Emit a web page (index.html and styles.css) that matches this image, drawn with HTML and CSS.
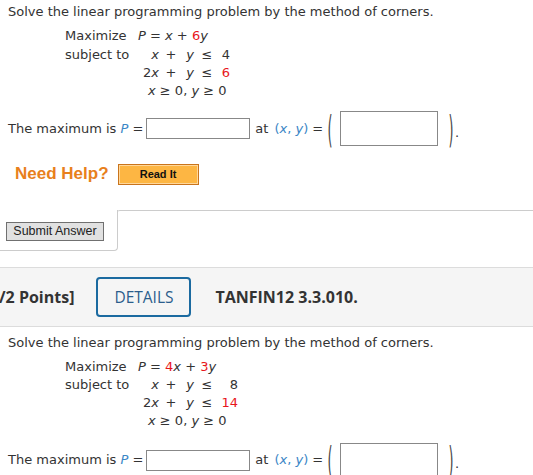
FILE: index.html
```html
<!DOCTYPE html>
<html>
<head>
<meta charset="utf-8">
<link rel="stylesheet" href="styles.css">
</head>
<body>
<div class="question q1">
  <p class="intro">Solve the linear programming problem by the method of corners.</p>
  <div class="lp">
    <div class="label">Maximize</div>
    <div class="obj"><i>P</i> = <i>x</i> + <span class="red">6</span><i>y</i></div>
    <div class="label">subject to</div>
    <div class="cons">
      <span class="c1"><i>x</i></span><span class="c2">+</span><span class="c3"><i>y</i></span><span class="c4">≤</span><span class="c5">4</span>
      <span class="c1">2<i>x</i></span><span class="c2">+</span><span class="c3"><i>y</i></span><span class="c4">≤</span><span class="c5 red">6</span>
      <span class="nonneg"><i>x</i> ≥ 0, <i>y</i> ≥ 0</span>
    </div>
  </div>
  <div class="answer">
    <span>The maximum is <i class="blue">P</i> =</span>
    <span class="box small"></span>
    <span class="at">at</span>
    <span class="blue xy">(<i>x</i>, <i>y</i>)</span>
    <span>=</span>
    <span class="paren">(</span>
    <span class="box big"></span>
    <span class="paren close">)</span><span class="dot">.</span>
  </div>
  <div class="help">
    <span class="need">Need Help?</span>
    <button class="readit">Read It</button>
  </div>
</div>
<div class="submit-row">
  <div class="submit-box"><button class="submit">Submit Answer</button></div>
  <div class="submit-rest"></div>
</div>
<div class="qhead">
  <span class="points">/2 Points]</span>
  <button class="details">DETAILS</button>
  <span class="code">TANFIN12 3.3.010.</span>
</div>
<div class="question q2">
  <p class="intro">Solve the linear programming problem by the method of corners.</p>
  <div class="lp">
    <div class="label">Maximize</div>
    <div class="obj"><i>P</i> = <span class="red">4</span><i>x</i> + <span class="red">3</span><i>y</i></div>
    <div class="label">subject to</div>
    <div class="cons">
      <span class="c1"><i>x</i></span><span class="c2">+</span><span class="c3"><i>y</i></span><span class="c4">≤</span><span class="c5">8</span>
      <span class="c1">2<i>x</i></span><span class="c2">+</span><span class="c3"><i>y</i></span><span class="c4">≤</span><span class="c5 red">14</span>
      <span class="nonneg"><i>x</i> ≥ 0, <i>y</i> ≥ 0</span>
    </div>
  </div>
  <div class="answer">
    <span>The maximum is <i class="blue">P</i> =</span>
    <span class="box small"></span>
    <span class="at">at</span>
    <span class="blue xy">(<i>x</i>, <i>y</i>)</span>
    <span>=</span>
    <span class="paren">(</span>
    <span class="box big"></span>
    <span class="paren close">)</span><span class="dot">.</span>
  </div>
</div>
</body>
</html>
```

FILE: styles.css
```css
html, body {
  margin: 0;
  padding: 0;
  background: #fff;
  overflow: hidden;
}
body {
  font-family: "DejaVu Sans", Verdana, sans-serif;
  font-size: 13px;
  color: #333;
  line-height: 18px;
  width: 533px;
  height: 475px;
}
i { font-style: italic; }
.red { color: #e8161b; }
.blue { color: #3b86c6; }

.question {
  padding: 0 8px;
}
.intro {
  margin: 3px 0 0 0;
}
.lp {
  display: grid;
  grid-template-columns: 73px auto;
  margin: 6px 0 0 57px;
  row-gap: 0.5px;
}
.lp .obj { grid-column: 2; }
.cons {
  display: grid;
  grid-template-columns: 22px 22px 16px 18px 14px;
  grid-column: 2;
  grid-row: 2 / span 3;
}
.q2 .cons {
  grid-template-columns: 22px 22px 16px 18px 22px;
}
.c1 { text-align: right; padding-right: 1px; }
.c2 { text-align: center; }
.c3 { text-align: center; }
.c4 { text-align: center; }
.c5 { text-align: right; }
.nonneg {
  grid-column: 1 / -1;
  padding-left: 10px;
}
.answer {
  display: flex;
  align-items: center;
  margin-top: 12px;
  height: 34px;
  gap: 4px;
}
.box {
  display: inline-block;
  border: 1px solid #888;
  background: #fff;
  box-sizing: border-box;
}
.box.small {
  width: 104px;
  height: 21px;
  margin-left: -1px;
}
.at { margin-left: 1px; }
.xy { margin-left: 2px; }
.box.big {
  width: 98px;
  height: 35px;
  margin-left: 3px;
}
.paren {
  display: inline-block;
  font-size: 15px;
  transform: scale(0.85, 2.5);
  color: #444;
  margin: 0;
}
.paren.close { margin: 0 0 0 6px; }
.dot { margin-left: -3px; padding-top: 8px; }

.help {
  display: flex;
  align-items: center;
  margin: 18px 0 0 7px;
  gap: 9px;
}
.need {
  font-family: "Liberation Sans", Arial, sans-serif;
  font-weight: bold;
  font-size: 17px;
  color: #e8801c;
}
.readit {
  font-family: "Liberation Sans", Arial, sans-serif;
  font-weight: bold;
  font-size: 11px;
  color: #111;
  width: 81px;
  height: 21px;
  padding: 0;
  border: 1px solid #c9741c;
  box-shadow: inset 0 0 0 1px #ffd79a;
  background: #fdb643;
}

.submit-row {
  display: flex;
  margin-top: 25px;
  height: 41px;
}
.submit-box {
  width: 118px;
  box-sizing: border-box;
  border-right: 1px solid #ccc;
  border-bottom: 1px solid #ccc;
  border-bottom-right-radius: 4px;
  padding: 12px 0 0 6px;
}
.submit-rest {
  flex: 1;
  border-top: 1px solid #ccc;
  border-top-left-radius: 3px;
  margin-left: -1px;
}
.submit {
  font-family: "Liberation Sans", Arial, sans-serif;
  font-size: 12.5px;
  color: #222;
  background: #e1e1e1;
  border: 1px solid #707070;
  width: 98px;
  height: 19px;
  padding: 0;
  line-height: 17px;
}

.qhead {
  margin-top: 16px;
  height: 58px;
  background: #f5f5f5;
  border-top: 1px solid #dcdcdc;
  border-bottom: 1px solid #dcdcdc;
  display: flex;
  align-items: center;
  font-family: "Open Sans", sans-serif;
  font-size: 16px;
}
.points {
  font-weight: bold;
  color: #333;
  margin-left: -1px;
}
.details {
  font-family: "Open Sans", sans-serif;
  font-size: 15.5px;
  color: #2b5d8c;
  background: transparent;
  border: 2px solid #1b6aa0;
  border-radius: 4px;
  width: 95px;
  height: 40px;
  margin-left: 22px;
  padding: 0;
}
.code {
  font-weight: bold;
  color: #333;
  margin-left: 24px;
}
.q2 .intro { margin-top: 7px; }
.q2 .answer { margin-top: 13px; }
```
